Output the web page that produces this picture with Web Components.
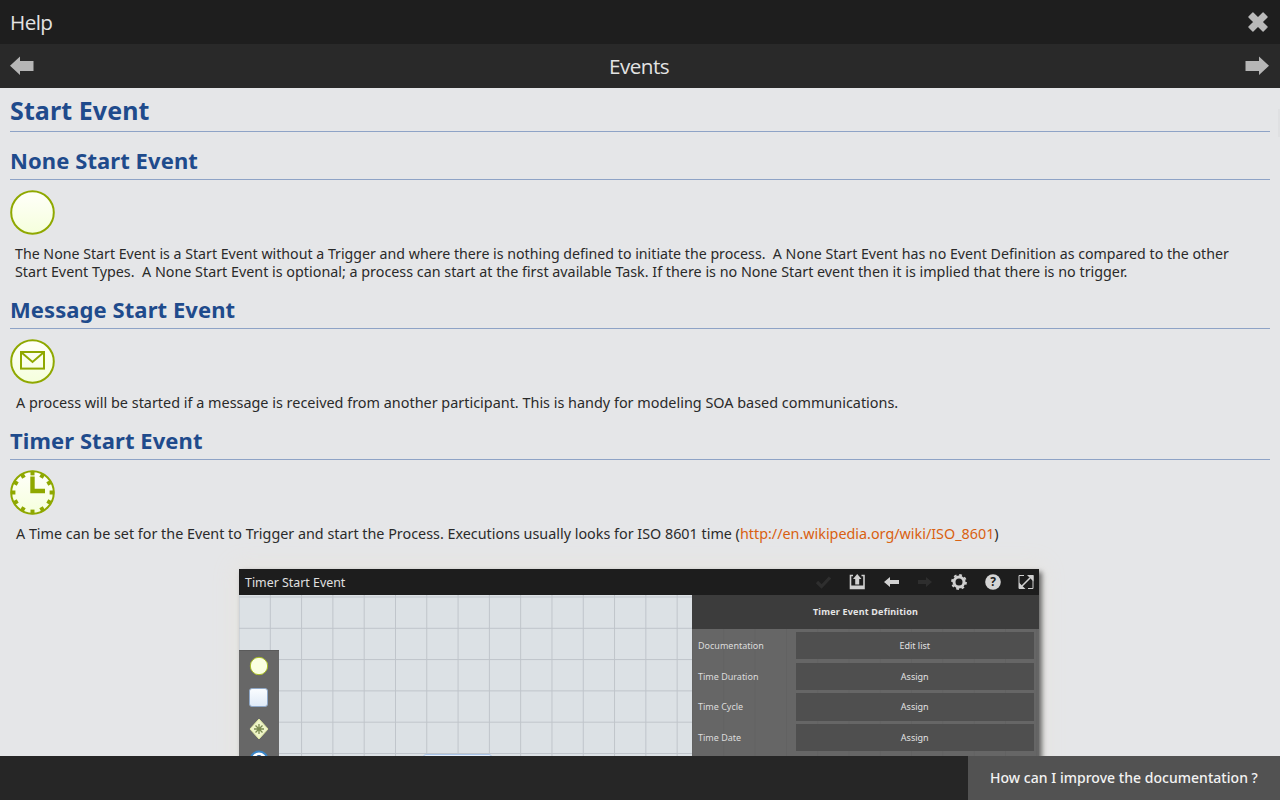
<!DOCTYPE html>
<html><head><meta charset="utf-8">
<style>
html,body{margin:0;padding:0;height:100%;overflow:hidden;background:#e5e6e8;font-family:"Noto Sans","Open Sans",sans-serif}
</style></head><body>
<help-app></help-app>
<script>
function def(name, html){
  customElements.define(name, class extends HTMLElement{
    constructor(){super();this.attachShadow({mode:'open'}).innerHTML=html;}
  });
}
const ARROW='<svg width="24" height="20" viewBox="0 0 24 20"><polygon fill="#b6b6b6" points="0,9.7 10,0.5 10,5 23.5,5 23.5,15 10,15 10,19"/></svg>';
const ARROWR='<svg width="24" height="20" viewBox="0 0 24 20"><polygon fill="#b6b6b6" points="24,9.7 14,0.5 14,5 0.5,5 0.5,15 14,15 14,19"/></svg>';
const CLOSE='<svg width="22" height="22" viewBox="0 0 22 22"><path transform="translate(11 11) rotate(45)" d="M-2.8 -10H2.8V-2.8H10V2.8H2.8V10H-2.8V2.8H-10V-2.8H-2.8Z" fill="#b9b9b9" stroke="#b9b9b9" stroke-width="1.4" stroke-linejoin="round"/></svg>';

def('title-bar',`<style>:host{display:flex;flex:none;height:44px;background:#1e1e1e;align-items:center;justify-content:space-between;padding:0 11px 0 10px;color:#e3e3e3;font:20.7px/44px "Open Sans",sans-serif;letter-spacing:-.6px}
svg{display:block}</style><span><slot></slot></span>${CLOSE}`);
def('nav-bar',`<style>:host{display:flex;flex:none;height:44px;background:#292929;align-items:center;justify-content:space-between;padding:0 11px 0 10px;color:#e3e3e3;font:20.7px/43px "Open Sans",sans-serif;letter-spacing:-.55px}
span{position:relative;left:-.5px}
svg{display:block}</style>${ARROW}<span><slot></slot></span>${ARROWR}`);
def('help-h1',`<style>:host{display:block;margin:0 8px 0 10px;height:44px;box-sizing:border-box;border-bottom:1px solid #8ea3c6;color:#1f4b8c;font:700 25px/45px "Noto Sans",sans-serif;letter-spacing:.1px}</style><slot></slot>`);
def('help-h2',`<style>:host{display:block;margin:11px 8px 0 10px;height:37px;box-sizing:border-box;border-bottom:1px solid #8ea3c6;color:#1f4b8c;font:700 22px/34px "Noto Sans",sans-serif;letter-spacing:.08px}</style><slot></slot>`);
def('help-p',`<style>:host{display:block;margin:10px 0 0 16px;color:#2a2a2a;font:14.35px/18px "Noto Sans",sans-serif;white-space:pre}</style><slot></slot>`);
const EV=(inner)=>`<style>:host{display:block;margin:10px 0 0 10px;width:45px;height:45px}svg{display:block}</style><svg width="45" height="45" viewBox="0 0 45 45"><defs><linearGradient id="g" x1="0" y1="0" x2="0" y2="1"><stop offset="0" stop-color="#fffffa"/><stop offset="1" stop-color="#f5ffdc"/></linearGradient></defs><circle cx="22.5" cy="22.5" r="21.3" fill="url(#g)" stroke="#8fa800" stroke-width="2"/>${inner}</svg>`;
def('event-none',EV(''));
def('event-message',EV('<rect x="11" y="13" width="23" height="16.6" fill="none" stroke="#8fa800" stroke-width="2"/><path d="M11.5 13.5L22.5 23L33.5 13.5" fill="none" stroke="#8fa800" stroke-width="2"/>'));
let ticks='';for(let i=0;i<12;i++){ticks+=`<rect x="20.5" y="0.8" width="4" height="4.6" fill="#8fa800" transform="rotate(${i*30} 22.5 22.5)"/>`}
def('event-timer',EV(ticks+'<path d="M22.5 6.5V21H35" fill="none" stroke="#8fa800" stroke-width="4.4"/>'));

def('shot-button',`<style>:host{display:block;height:27.4px;margin-bottom:3.2px;background:#4f4f4f;color:#e2e2e2;font:9px/27.4px "Noto Sans",sans-serif;text-align:center}</style><slot></slot>`);
def('shot-row',`<style>:host{display:flex;height:30.6px;color:#dcdcdc;font:9px/28px "Noto Sans",sans-serif}
.l{width:103.5px;padding-left:6px;box-sizing:border-box;flex:none}.r{flex:1}</style><div class="l"><slot name="label"></slot></div><div class="r"><slot></slot></div>`);
def('shot-palette',`<style>:host{display:block;position:absolute;left:0;top:55px;width:40px;height:130px;background:#676767;border-top:1px solid #5a5a5a}
svg{display:block}</style><svg width="40" height="130" viewBox="0 0 40 130"><defs><linearGradient id="b" x1="0" y1="0" x2="0" y2="1"><stop offset="0" stop-color="#fbfdff"/><stop offset="1" stop-color="#dfeaf7"/></linearGradient></defs>
<circle cx="20" cy="15" r="8.7" fill="#faffe0" stroke="#a5ba20" stroke-width="1"/>
<rect x="10.5" y="37.5" width="18" height="18" rx="2.5" fill="url(#b)" stroke="#8fa8c8"/>
<path d="M20 68L29 78L20 88L11 78Z" fill="#eef4c8" stroke="#dde6a0"/><path d="M20 73V83M15 78H25M16.5 74.5L23.5 81.5M23.5 74.5L16.5 81.5" stroke="#7a8a50" stroke-width="1.3"/>
<circle cx="20" cy="109" r="8.5" fill="#fff" stroke="#3a86c8" stroke-width="2"/><circle cx="20" cy="107" r="3" fill="#27609a"/></svg>`);
def('shot-icons',`<style>:host{display:block;width:231px;height:26px}svg{display:block}text{font:700 12px "Noto Sans",sans-serif}</style>
<svg width="231" height="26" viewBox="0 0 231 26">
<path d="M9 13L13.5 17.5L22 8.5" fill="none" stroke="#2e2e2e" stroke-width="3.2"/>
<path d="M45 6.5H42.5V19.5H56V6.5H53.5" fill="none" stroke="#d0d0d0" stroke-width="1.6"/><rect x="42.5" y="16.5" width="13.5" height="3.4" fill="#d0d0d0"/><path d="M49.2 5L53.5 10H51.2V15.5H47.2V10H45Z" fill="#d0d0d0"/>
<path d="M76 13L82 8V11H91V15H82V18Z" fill="#d2d2d2"/>
<path d="M124 13L118 8V11H110V15H118V18Z" fill="#2e2e2e"/>
<circle cx="151" cy="13" r="5" fill="none" stroke="#d0d0d0" stroke-width="3"/><circle cx="151" cy="13" r="7" fill="none" stroke="#d0d0d0" stroke-width="1.8" stroke-dasharray="2.75 2.75"/>
<circle cx="185" cy="13" r="7.8" fill="#d4d4d4"/><text x="185" y="17.3" text-anchor="middle" fill="#1d1d1d">?</text>
<path d="M211 19.5V6.5H216M225 6.5V19.5H220" fill="none" stroke="#d0d0d0" stroke-width="1"/><path d="M219 6H225.5V12.5ZM211 13.5V20H217.5Z" fill="#d0d0d0"/><path d="M214 17L222 9" stroke="#d0d0d0" stroke-width="1.6"/>
</svg>`);
def('shot-image',`<style>:host{display:block;position:relative;width:800px;height:600px;margin:0 auto;background:#dce1e5;box-shadow:3px 3px 5px rgba(0,0,0,.55),0 0 22px 6px #e7e5e1;font-family:"Noto Sans",sans-serif}
.top{display:flex;justify-content:space-between;align-items:center;height:26px;background:#1d1d1d;color:#e0e0e0;font-size:12.4px;padding-left:6px}
.main{display:flex;height:574px}
.grid{width:453px;position:relative;background-color:#dce1e5;background-image:linear-gradient(to right,#bfc4ca 1.4px,transparent 1.4px),linear-gradient(to bottom,#bfc4ca 1.4px,transparent 1.4px);background-size:31.3px 31.3px;background-position:-0.5px 1.5px}
.task{position:absolute;left:184px;top:159px;width:69px;height:60px;background:#e6effa;border:1px solid #a9c4e8;box-sizing:border-box;border-radius:3px}
.panel{flex:1;background-color:#666;background-image:linear-gradient(to right,#626262 1px,transparent 1px);background-size:31.3px 100%;box-sizing:border-box}
.head{height:34px;background:#3c3c3c;color:#e5e5e5;font:700 9px/34px "Noto Sans",sans-serif;letter-spacing:.2px;text-align:center}
.rows{padding:3px 5px 0 0}
</style>
<div class="top"><span>Timer Start Event</span><shot-icons></shot-icons></div>
<div class="main"><div class="grid"><shot-palette></shot-palette><div class="task"></div></div>
<div class="panel"><div class="head">Timer Event Definition</div><div class="rows">
<shot-row><span slot="label">Documentation</span><shot-button>Edit list</shot-button></shot-row>
<shot-row><span slot="label">Time Duration</span><shot-button>Assign</shot-button></shot-row>
<shot-row><span slot="label">Time Cycle</span><shot-button>Assign</shot-button></shot-row>
<shot-row><span slot="label">Time Date</span><shot-button>Assign</shot-button></shot-row>
</div></div></div>`);
def('foot-bar',`<style>:host{display:flex;flex:none;height:44px;background:#262626;justify-content:flex-end;position:relative;z-index:2}
button{all:unset;box-sizing:border-box;width:312px;height:44px;background:#525252;color:#f2f2f2;padding-left:22px;font:500 14px/44px "Noto Sans",sans-serif;letter-spacing:.03px}</style><button><slot></slot></button>`);
def('help-content',`<style>:host{display:block;flex:1;min-height:0;overflow:hidden;position:relative;background:#e5e6e8;padding-right:2px;box-sizing:border-box}
.thumb{position:absolute;right:0;top:21px;width:2px;height:28px;background:#dfe0e2}
</style><slot></slot><div class="thumb"></div>`);
def('help-app',`<style>:host{display:flex;flex-direction:column;height:800px;width:1280px}
a{color:#d9600f;text-decoration:none}</style>
<title-bar>Help</title-bar><nav-bar>Events</nav-bar>
<help-content>
<help-h1>Start Event</help-h1>
<help-h2>None Start Event</help-h2>
<event-none></event-none>
<help-p style="margin-left:15px;font-size:14.2px">The None Start Event is a Start Event without a Trigger and where there is nothing defined to initiate the process.  A None Start Event has no Event Definition as compared to the other
<span style="font-size:14.33px">Start Event Types.  A None Start Event is optional; a process can start at the first available Task. If there is no None Start event then it is implied that there is no trigger.</span></help-p>
<help-h2>Message Start Event</help-h2>
<event-message></event-message>
<help-p style="font-size:14.41px">A process will be started if a message is received from another participant. This is handy for modeling SOA based communications.</help-p>
<help-h2>Timer Start Event</help-h2>
<event-timer></event-timer>
<help-p>A Time can be set for the Event to Trigger and start the Process. Executions usually looks for ISO 8601 time (<a href="#">http://en.wikipedia.org/wiki/ISO_8601</a>)</help-p>
<div style="height:26px"></div>
<shot-image></shot-image>
</help-content>
<foot-bar>How can I improve the documentation ?</foot-bar>`);
</script>
</body></html>
